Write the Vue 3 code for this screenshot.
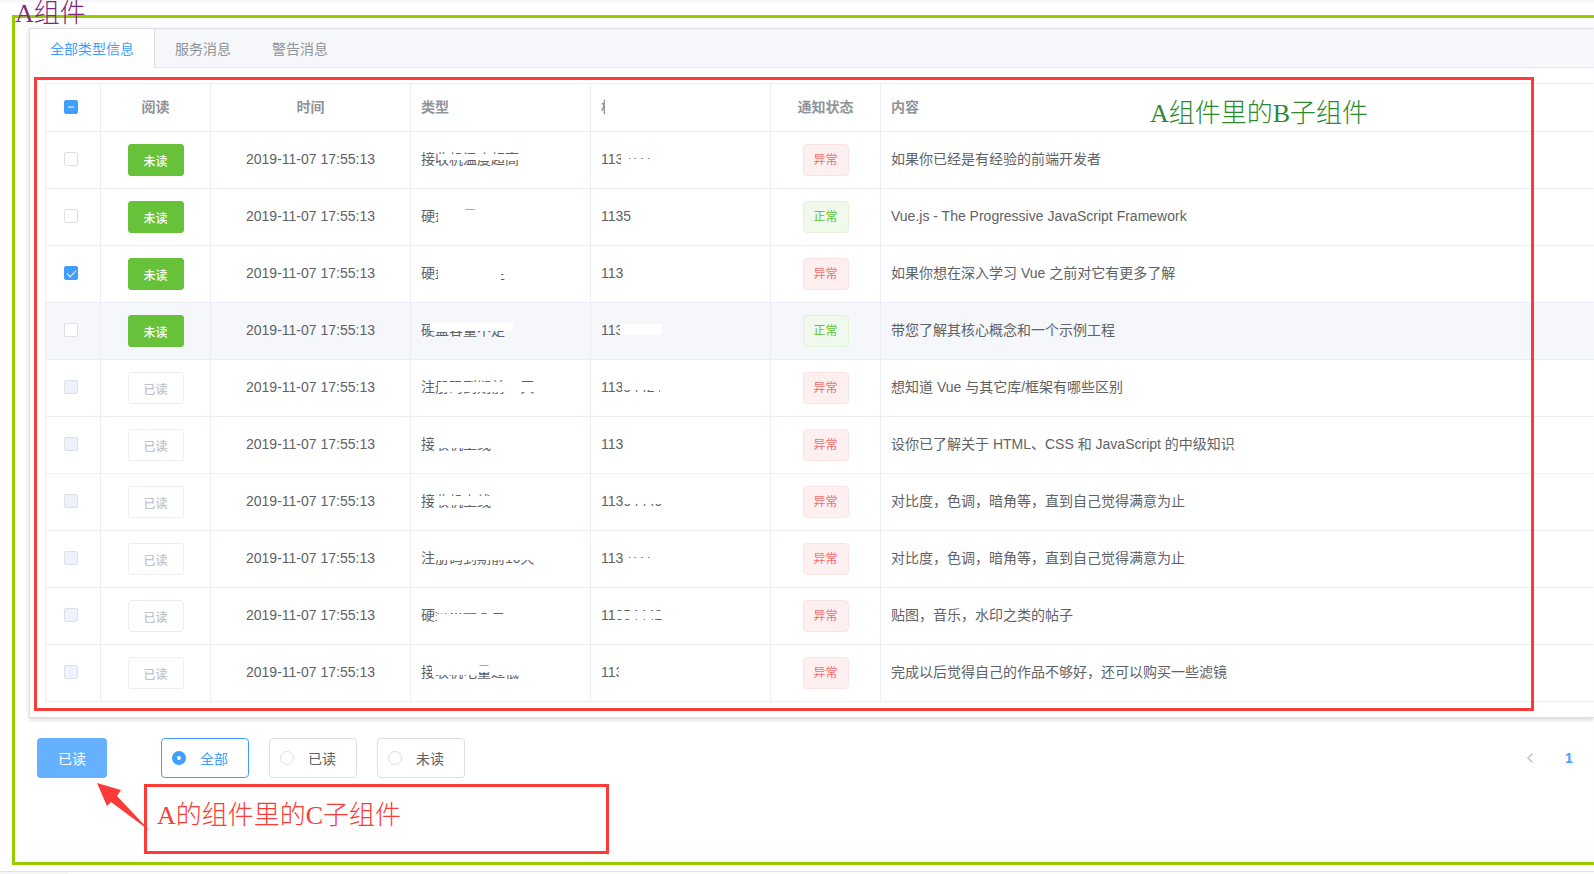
<template>
  <div class="page">
    <main class="frame">
      <span class="note note-a">A组件</span>

      <section class="tabs-card">
        <nav class="tabs-header" role="tablist">
          <button
            v-for="tab in tabs"
            :key="tab"
            type="button"
            role="tab"
            class="tab"
            :class="{ active: tab === activeTab }"
            :aria-selected="tab === activeTab"
            @click="activeTab = tab"
          >{{ tab }}</button>
        </nav>

        <div class="tabs-content">
          <div class="outline-b"></div>
          <span class="note note-b">A组件里的B子组件</span>
          <table class="table">
            <colgroup>
              <col class="w-check" />
              <col class="w-small" />
              <col class="w-time" />
              <col class="w-mid" />
              <col class="w-mid" />
              <col class="w-small" />
              <col />
            </colgroup>
            <thead>
              <tr>
                <th class="check">
                  <input
                    type="checkbox"
                    aria-label="全选"
                    :indeterminate="someChecked"
                    :checked="allChecked"
                    @change="toggleAll"
                  />
                </th>
                <th class="center">阅读</th>
                <th class="center">时间</th>
                <th>类型</th>
                <th>
                  <span class="masked">机<i class="mask" :style="maskStyle([4, 0, 12, 24])"></i></span>
                </th>
                <th class="center">通知状态</th>
                <th>内容</th>
              </tr>
            </thead>
            <tbody>
              <tr v-for="(row, index) in rows" :key="index" :class="{ hover: index === 3 }">
                <td class="check">
                  <input v-model="row.checked" type="checkbox" :disabled="row.read" aria-label="选择" />
                </td>
                <td class="center boxed">
                  <button type="button" class="read-btn" :disabled="row.read" @click="row.read = true">
                    {{ row.read ? '已读' : '未读' }}
                  </button>
                </td>
                <td class="center">2019-11-07 17:55:13</td>
                <td>
                  <span class="masked">{{ row.type }}<i v-for="(m, i) in row.typeMasks" :key="i" class="mask" :style="maskStyle(m)"></i></span>
                </td>
                <td>
                  <span class="masked">{{ row.code }}<i v-for="(m, i) in row.codeMasks" :key="i" class="mask" :style="maskStyle(m)"></i></span>
                </td>
                <td class="center boxed">
                  <span class="tag" :class="row.ok ? 'success' : 'danger'">{{ row.ok ? '正常' : '异常' }}</span>
                </td>
                <td>{{ row.content }}</td>
              </tr>
            </tbody>
          </table>
        </div>
      </section>

      <div class="toolbar">
        <button type="button" class="primary-btn" @click="markRead">已读</button>
        <div class="radios" role="radiogroup">
          <label v-for="item in filters" :key="item" class="radio" :class="{ active: item === filter }">
            <input v-model="filter" type="radio" name="filter" :value="item" />
            <span>{{ item }}</span>
          </label>
        </div>
        <div class="pager">
          <button type="button" class="pager-prev" aria-label="上一页" disabled>
            <svg width="8" height="12" viewBox="0 0 8 12">
              <path d="M6.5 1.5L2 6l4.5 4.5" fill="none" stroke="currentColor" stroke-width="1.5" />
            </svg>
          </button>
          <button type="button" class="pager-num">1</button>
        </div>
      </div>

      <div class="outline-c">
        <svg class="arrow" width="54" height="50" viewBox="0 0 54 50">
          <path d="M0 0L24 7L20 13L53 48L14 19L10 23Z" fill="#fc3a37" />
        </svg>
        <span class="note note-c">A的组件里的C子组件</span>
      </div>
    </main>
    <footer class="status"></footer>
  </div>
</template>

<script setup>
import { ref, computed } from 'vue'

const tabs = ['全部类型信息', '服务消息', '警告消息']
const activeTab = ref(tabs[0])

const filters = ['全部', '已读', '未读']
const filter = ref('全部')

// masks are [left, top, width, height] of the blanked-out parts of a cell
const rows = ref([
  {
    type: '接收机温度超高',
    typeMasks: [[17, 7, 84, 6]],
    code: '1135111',
    codeMasks: [[20, 0, 8, 24], [28, 0, 36, 11], [28, 12, 36, 12]],
    content: '如果你已经是有经验的前端开发者',
    ok: false, read: false, checked: false
  },
  {
    type: '硬盘容量不足',
    typeMasks: [[17, 0, 27, 24], [44, 6, 10, 18], [54, 0, 34, 24]],
    code: '1135',
    content: 'Vue.js - The Progressive JavaScript Framework',
    ok: true, read: false, checked: false
  },
  {
    type: '硬盘容量不足',
    typeMasks: [[17, 0, 63, 24], [80, 0, 8, 12]],
    code: '113',
    content: '如果你想在深入学习 Vue 之前对它有更多了解',
    ok: false, read: false, checked: true
  },
  {
    type: '硬盘容量不足',
    typeMasks: [[9, 5, 83, 8]],
    code: '113',
    codeMasks: [[19, 6, 42, 11]],
    content: '带您了解其核心概念和一个示例工程',
    ok: true, read: false, checked: false
  },
  {
    type: '注册码到期前10天',
    typeMasks: [[17, 7, 100, 10], [83, 0, 16, 24]],
    code: '11354424',
    codeMasks: [[21, 0, 42, 15], [59, 0, 6, 24]],
    content: '想知道 Vue 与其它库/框架有哪些区别',
    ok: false, read: true, checked: false
  },
  {
    type: '接收机上线',
    typeMasks: [[13, 0, 60, 16]],
    code: '113',
    content: '设你已了解关于 HTML、CSS 和 JavaScript 的中级知识',
    ok: false, read: true, checked: false
  },
  {
    type: '接收机上线',
    typeMasks: [[13, 7, 60, 9]],
    code: '11364440',
    codeMasks: [[22, 0, 42, 15]],
    content: '对比度，色调，暗角等，直到自己觉得满意为止',
    ok: false, read: true, checked: false
  },
  {
    type: '注册码到期前10天',
    typeMasks: [[14, 0, 102, 14]],
    code: '1135111',
    codeMasks: [[22, 0, 6, 24], [28, 0, 36, 11], [28, 12, 36, 12]],
    content: '对比度，色调，暗角等，直到自己觉得满意为止',
    ok: false, read: true, checked: false
  },
  {
    type: '硬盘容量不足',
    typeMasks: [[16, 0, 72, 10], [16, 11, 72, 13]],
    code: '11354442',
    codeMasks: [[15, 8, 48, 8]],
    content: '贴图，音乐，水印之类的帖子',
    ok: false, read: true, checked: false
  },
  {
    type: '接收机电量过低',
    typeMasks: [[11, 0, 46, 15], [57, 6, 12, 6], [69, 0, 32, 15]],
    code: '113',
    codeMasks: [[18, 0, 10, 24]],
    content: '完成以后觉得自己的作品不够好，还可以购买一些滤镜',
    ok: false, read: true, checked: false
  }
])

const selectable = computed(() => rows.value.filter((row) => !row.read))
const allChecked = computed(() => selectable.value.length > 0 && selectable.value.every((row) => row.checked))
const someChecked = computed(() => !allChecked.value && selectable.value.some((row) => row.checked))

function toggleAll(event) {
  selectable.value.forEach((row) => {
    row.checked = event.target.checked
  })
}

function markRead() {
  rows.value.forEach((row) => {
    if (row.checked) {
      row.read = true
      row.checked = false
    }
  })
}

function maskStyle([left, top, width, height]) {
  return { left: left + 'px', top: top + 'px', width: width + 'px', height: height + 'px' }
}
</script>

<style>
body {
  margin: 0;
  background: #fff;
}
</style>

<style scoped>
.page {
  overflow: hidden;
  font-family: "Liberation Sans", "Noto Sans CJK SC", sans-serif;
  font-size: 14px;
  color: #606266;
  padding-top: 15px;
  box-shadow: inset 0 2px 2px #f6f6f6;
}
.page * {
  box-sizing: border-box;
}
button {
  font-family: inherit;
  cursor: pointer;
}

.frame {
  position: relative;
  margin-left: 12px;
  padding: 10px 0 8px 14px;
  border: 3px solid #99cc00;
  border-right: none;
}

.note {
  font-family: "Liberation Serif", "Noto Sans CJK SC", serif;
  font-weight: 300;
  font-size: 26px;
  line-height: 36px;
  white-space: nowrap;
}
.note-a {
  position: absolute;
  left: 0;
  top: -18px;
  line-height: 28px;
  color: #7d2a7d;
}
.note-b {
  position: absolute;
  right: 226px;
  top: 28px;
  color: #2c8a2c;
}
.note-c {
  color: #fc3a37;
}

.tabs-card {
  border: 1px solid #dcdfe6;
  border-right: none;
  box-shadow: 0 2px 4px rgba(0, 0, 0, 0.12), 0 0 6px rgba(0, 0, 0, 0.04);
}
.tabs-header {
  display: flex;
  background: #f5f7fa;
  border-bottom: 1px solid #e4e7ed;
}
.tab {
  height: 38px;
  margin-bottom: -1px;
  padding: 0 20px;
  border: none;
  border-right: 1px solid transparent;
  background: none;
  font-size: 14px;
  color: #909399;
}
.tab.active {
  height: 39px;
  padding-bottom: 1px;
  background: #fff;
  border-right-color: #dcdfe6;
  color: #409eff;
}

.tabs-content {
  position: relative;
  padding: 15px 0 15px 15px;
}
.outline-b {
  position: absolute;
  left: 4px;
  right: 60px;
  top: 9px;
  bottom: 6px;
  border: 3px solid #fc3a37;
  pointer-events: none;
}

.table {
  width: 100%;
  table-layout: fixed;
  border-collapse: separate;
  border-spacing: 0;
  border-top: 1px solid #ebeef5;
  border-left: 1px solid #ebeef5;
}
.w-check {
  width: 55px;
}
.w-small {
  width: 110px;
}
.w-time {
  width: 200px;
}
.w-mid {
  width: 180px;
}
th,
td {
  padding: 0 10px 2px;
  border-right: 1px solid #ebeef5;
  border-bottom: 1px solid #ebeef5;
  text-align: left;
  line-height: 24px;
}
th:last-child,
td:last-child {
  border-right: none;
}
th {
  height: 48px;
  color: #909399;
  font-weight: bold;
}
td {
  height: 57px;
}
.center {
  text-align: center;
}
.boxed {
  padding-bottom: 0;
}
.check {
  padding: 0 14px 2px 10px;
  text-align: center;
}
.hover td {
  background: #f5f7fa;
}

input[type='checkbox'] {
  appearance: none;
  position: relative;
  display: block;
  width: 14px;
  height: 14px;
  margin: 0 auto;
  border: 1px solid #dcdfe6;
  border-radius: 2px;
  background: #fff;
}
input[type='checkbox']:disabled {
  background: #edf2fc;
}
input[type='checkbox']:checked,
input[type='checkbox']:indeterminate {
  background: #409eff;
  border-color: #409eff;
}
input[type='checkbox']:checked::after {
  content: '';
  position: absolute;
  left: 4px;
  top: 1px;
  width: 4px;
  height: 8px;
  border: 1px solid #fff;
  border-left: 0;
  border-top: 0;
  transform: rotate(45deg);
}
input[type='checkbox']:indeterminate::after {
  content: '';
  position: absolute;
  left: 3px;
  top: 5px;
  width: 6px;
  height: 2px;
  background: #a0cfff;
}

.read-btn {
  display: block;
  width: 56px;
  height: 32px;
  margin: 0 auto;
  padding: 0;
  border: 1px solid #67c23a;
  border-radius: 3px;
  background: #67c23a;
  color: #fff;
  font-size: 12px;
  font-weight: 500;
}
.read-btn:disabled {
  background: #fff;
  border-color: #ebeef5;
  color: #c0c4cc;
}

.masked {
  position: relative;
  display: inline-block;
  height: 24px;
  vertical-align: top;
  white-space: nowrap;
}
.mask {
  position: absolute;
  background: #fff;
}

.tag {
  display: block;
  width: 46px;
  height: 32px;
  margin: 0 auto;
  border: 1px solid;
  border-radius: 4px;
  font-size: 12px;
  line-height: 30px;
}
.tag.danger {
  background: #fef0f0;
  border-color: #fde2e2;
  color: #f56c6c;
}
.tag.success {
  background: #f0f9eb;
  border-color: #e1f3d8;
  color: #67c23a;
}

.toolbar {
  display: flex;
  align-items: center;
  margin-top: 20px;
  padding: 0 7px 0 8px;
}
.primary-btn {
  width: 70px;
  height: 40px;
  border: none;
  border-radius: 4px;
  background: #66b1ff;
  color: #fff;
  font-size: 14px;
}
.radios {
  display: flex;
  gap: 20px;
  margin-left: 54px;
}
.radio {
  display: flex;
  align-items: center;
  gap: 14px;
  height: 40px;
  padding: 0 20px 0 10px;
  border: 1px solid #dcdfe6;
  border-radius: 4px;
  cursor: pointer;
}
.radio.active {
  border-color: #409eff;
  color: #409eff;
}
.radio input {
  appearance: none;
  width: 14px;
  height: 14px;
  margin: 0;
  border: 1px solid #dcdfe6;
  border-radius: 50%;
  background: #fff;
}
.radio input:checked {
  border: 5px solid #409eff;
}

.pager {
  display: flex;
  align-items: center;
  margin-left: auto;
}
.pager button {
  display: flex;
  align-items: center;
  justify-content: center;
  height: 28px;
  padding: 0;
  border: none;
  background: none;
}
.pager .pager-prev {
  width: 42px;
  color: #c0c4cc;
}
.pager .pager-num {
  width: 36px;
  color: #409eff;
  font-size: 14px;
  font-weight: bold;
}

.outline-c {
  position: relative;
  width: 465px;
  max-width: 100%;
  margin: 6px 0 0 115px;
  padding: 11px 10px 17px;
  border: 3px solid #fc3a37;
}
.note-c {
  display: block;
}
.arrow {
  position: absolute;
  left: -50px;
  top: -4px;
}

.status {
  height: 3px;
  margin-top: 6px;
  border-top: 1px solid #e2e2e2;
  background: linear-gradient(to right, #f5f5f5 68px, #fcfcfc 68px);
}
</style>
